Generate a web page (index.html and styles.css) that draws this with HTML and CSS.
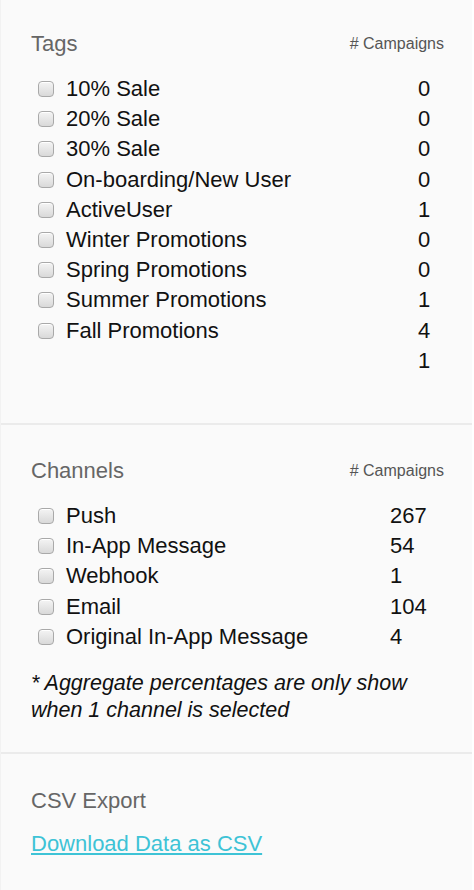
FILE: index.html
```html
<!DOCTYPE html>
<html lang="en">
<head>
    <meta charset="UTF-8">
    <meta name="viewport" content="width=device-width, initial-scale=1.0">
    <title>Filters</title>
    <link rel="stylesheet" href="styles.css">
</head>
<body>
    <div class="panel">
        <div class="section tags">
            <div class="section-head">
                <h2>Tags</h2>
                <span class="count-label"># Campaigns</span>
            </div>
            <ul class="list">
                <li><input type="checkbox"><span class="name">10% Sale</span><span class="num">0</span></li>
                <li><input type="checkbox"><span class="name">20% Sale</span><span class="num">0</span></li>
                <li><input type="checkbox"><span class="name">30% Sale</span><span class="num">0</span></li>
                <li><input type="checkbox"><span class="name">On-boarding/New User</span><span class="num">0</span></li>
                <li><input type="checkbox"><span class="name">ActiveUser</span><span class="num">1</span></li>
                <li><input type="checkbox"><span class="name">Winter Promotions</span><span class="num">0</span></li>
                <li><input type="checkbox"><span class="name">Spring Promotions</span><span class="num">0</span></li>
                <li><input type="checkbox"><span class="name">Summer Promotions</span><span class="num">1</span></li>
                <li><input type="checkbox"><span class="name">Fall Promotions</span><span class="num">4</span></li>
                <li><span class="blank"></span><span class="name"></span><span class="num">1</span></li>
            </ul>
        </div>

        <div class="section channels">
            <div class="section-head">
                <h2>Channels</h2>
                <span class="count-label"># Campaigns</span>
            </div>
            <ul class="list">
                <li><input type="checkbox"><span class="name">Push</span><span class="num">267</span></li>
                <li><input type="checkbox"><span class="name">In-App Message</span><span class="num">54</span></li>
                <li><input type="checkbox"><span class="name">Webhook</span><span class="num">1</span></li>
                <li><input type="checkbox"><span class="name">Email</span><span class="num">104</span></li>
                <li><input type="checkbox"><span class="name">Original In-App Message</span><span class="num">4</span></li>
            </ul>
            <p class="note">* Aggregate percentages are only show when 1 channel is selected</p>
        </div>

        <div class="section export">
            <h2>CSV Export</h2>
            <a href="#" class="download">Download Data as CSV</a>
        </div>
    </div>
</body>
</html>
```

FILE: styles.css
```css
body {
    margin: 0;
    padding: 0;
    background: #fff;
    font-family: 'Liberation Sans', Arial, sans-serif;
    color: #111;
}
.panel {
    width: 472px;
    min-height: 890px;
    background: #fafafa;
    box-sizing: border-box;
    border-left: 1px solid #f2f2f2;
}
.section {
    padding: 32px 28px 0 30px;
    border-bottom: 2px solid #ebebeb;
}
.tags {
    padding-bottom: 47px;
}
.tags .list {
    margin-top: 18px;
}
.channels {
    padding-top: 34px;
    padding-bottom: 28px;
}
.channels .list {
    margin-top: 18px;
}
.export {
    border-bottom: none;
    padding-top: 35px;
}
.section-head {
    display: flex;
    justify-content: space-between;
    align-items: center;
    height: 24px;
}
h2 {
    margin: 0;
    font-size: 22px;
    font-weight: normal;
    color: #666;
    line-height: 24px;
}
.count-label {
    font-size: 16px;
    color: #555;
}
.list {
    list-style: none;
    margin: 0;
    padding: 0 0 0 7px;
}
.list li {
    display: grid;
    grid-template-columns: 16px 1fr 26px;
    column-gap: 12px;
    align-items: center;
    height: 30.2px;
    font-size: 22px;
}
.channels .list li {
    grid-template-columns: 16px 1fr 54px;
}
.list input[type="checkbox"] {
    appearance: none;
    -webkit-appearance: none;
    width: 16px;
    height: 16px;
    margin: 0;
    border: 1px solid #a9a9a9;
    border-radius: 4px;
    background: linear-gradient(#f4f4f4, #d9d9d9);
    box-shadow: inset 0 1px 0 #fff;
    box-sizing: border-box;
}
.blank {
    width: 16px;
}
.num {
    text-align: left;
}
.note {
    margin: 18px 0 0 0;
    font-size: 21.5px;
    font-style: italic;
    line-height: 27px;
}
.download {
    display: inline-block;
    margin-top: 18px;
    font-size: 22px;
    color: #3ec3d6;
    text-decoration: underline;
}
```
